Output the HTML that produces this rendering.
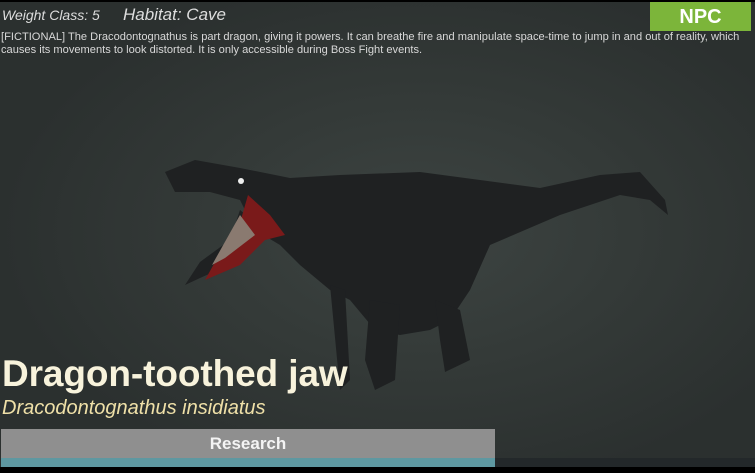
<!DOCTYPE html>
<html><head><style>
body{margin:0;width:755px;height:473px;overflow:hidden;background:#000;font-family:"Liberation Sans",sans-serif;}
#s{position:absolute;left:0;top:2px;width:755px;height:465px;background:radial-gradient(ellipse 420px 260px at 420px 230px,#3d4442 0%,#343a38 50%,#2b302f 100%);}
.t{position:absolute;color:#e8e8e8;}
</style></head><body>
<div id="s"></div>
<div class="t" style="left:2px;top:7px;font-size:14px;font-style:italic;color:#ddd">Weight Class: 5</div>
<div class="t" style="left:123px;top:5px;font-size:17px;font-style:italic;color:#ddd">Habitat: Cave</div>
<div style="position:absolute;left:650px;top:2px;width:101px;height:29px;background:#7cb53a;color:#fff;font-weight:bold;font-size:20px;text-align:center;line-height:30px">NPC</div>
<div class="t" style="left:1px;top:31px;width:750px;font-size:11.1px;line-height:12.5px;color:#d8d8d8">[FICTIONAL] The Dracodontognathus is part dragon, giving it powers. It can breathe fire and manipulate space-time to jump in and out of reality, which causes its movements to look distorted. It is only accessible during Boss Fight events.</div>
<svg style="position:absolute;left:0;top:0" width="755" height="473">
<g fill="#1f2122">
<path d="M165 172 L195 160 L240 168 L290 178 L340 175 L420 172 L480 180 L540 188 L600 175 L640 172 L665 200 L668 215 L650 200 L620 195 L560 215 L490 245 L470 290 L450 320 L430 330 L400 335 L375 330 L350 300 L330 290 L300 265 L280 245 L255 230 L240 200 L210 192 L175 192 Z"/>
<path d="M330 285 L345 290 L350 380 L340 390 Z"/>
<path d="M370 300 L400 305 L395 380 L375 390 L365 360 Z"/>
<path d="M435 300 L460 310 L470 360 L445 372 L440 340 Z"/>
<path d="M240 210 L265 230 L240 260 L200 278 L185 285 L200 262 L230 240 Z"/>
</g>
<path d="M248 195 L270 215 L285 235 L265 240 L240 265 L205 280 L215 262 L235 240 Z" fill="#7a1a1a"/>
<path d="M240 215 L255 235 L225 258 L212 265 Z" fill="#8a7a70"/>
<circle cx="241" cy="181" r="3" fill="#eee"/>
</svg>
<div class="t" style="left:2px;top:353px;font-size:37px;font-weight:bold;color:#f8f3dc;letter-spacing:-0.1px">Dragon-toothed jaw</div>
<div class="t" style="left:2px;top:397px;font-size:20px;font-style:italic;color:#efe0a8">Dracodontognathus insidiatus</div>
<div style="position:absolute;left:1px;top:429px;width:494px;height:30px;background:#8f8f8f;color:#f4f4f4;font-weight:bold;font-size:17px;text-align:center;line-height:29px">Research</div>
<div style="position:absolute;left:1px;top:458px;width:494px;height:9px;background:#5e98a1"></div>
<div style="position:absolute;left:495px;top:458px;width:260px;height:9px;background:#23282a"></div>
</body></html>
